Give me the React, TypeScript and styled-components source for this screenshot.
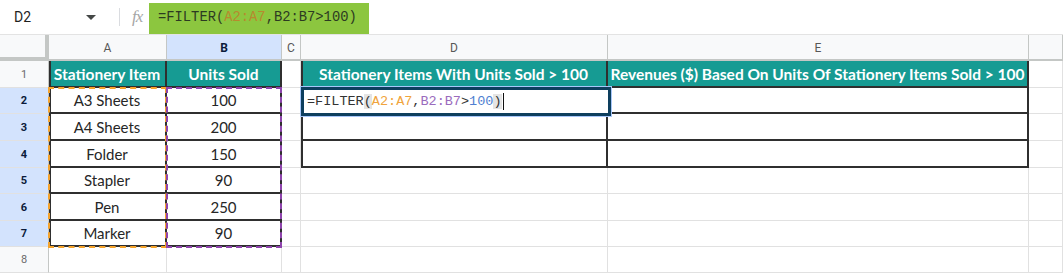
import React from 'react';
import styled, { createGlobalStyle } from 'styled-components';

const GlobalStyle = createGlobalStyle`
  html, body {
    margin: 0;
    padding: 0;
    background: #ffffff;
    overflow: hidden;
  }
  body {
    font-family: Roboto, "Liberation Sans", Arial, sans-serif;
  }
`;

const COL_WIDTHS = [49, 118, 115, 19, 307, 421, 34];
const ROW_HEIGHTS = [26, 27, 26, 27, 27, 26, 27, 26, 26];

const Page = styled.div`
  width: 1063px;
  height: 275px;
  overflow: hidden;
`;

const FormulaBar = styled.div`
  display: flex;
  align-items: center;
  height: 34px;
  border-bottom: 1px solid #e3e3e3;
`;

const NameBox = styled.div`
  width: 106px;
  padding-left: 14px;
  box-sizing: border-box;
  display: flex;
  align-items: center;
  justify-content: space-between;
  padding-right: 10px;
  font-size: 14px;
  color: #1f1f1f;
`;

const Caret = styled.span`
  width: 0;
  height: 0;
  border-left: 5px solid transparent;
  border-right: 5px solid transparent;
  border-top: 5px solid #444746;
`;

const Divider = styled.div`
  width: 1px;
  height: 18px;
  background: #dadce0;
  margin: 0 12px 0 13px;
`;

const Fx = styled.span`
  font-family: "Liberation Serif", "DejaVu Serif", serif;
  font-style: italic;
  font-size: 17px;
  color: #a6a6a6;
  width: 15px;
  letter-spacing: -1px;
`;

const FormulaHighlight = styled.div`
  align-self: flex-end;
  height: 31px;
  margin-left: 2px;
  width: 220px;
  box-sizing: border-box;
  padding: 0 0 2px 9px;
  background: #8cc63f;
  display: flex;
  align-items: center;
  font-family: "Liberation Mono", "DejaVu Sans Mono", monospace;
  font-size: 13.8px;
  color: #2c3a22;
`;

const Token = styled.span<{ $color?: string; $paren?: boolean }>`
  color: ${p => p.$color || 'inherit'};
  background: ${p => (p.$paren ? '#e4e4e4' : 'transparent')};
`;

const Sheet = styled.div`
  display: grid;
  grid-template-columns: ${COL_WIDTHS.map(w => `${w}px`).join(' ')};
  grid-template-rows: ${ROW_HEIGHTS.map(h => `${h}px`).join(' ')};
`;

type CellKind = 'corner' | 'colHead' | 'rowHead' | 'plain' | 'teal' | 'data';

const Cell = styled.div<{
  $row: number;
  $col: number;
  $kind: CellKind;
  $active?: boolean;
  $edge?: boolean;
}>`
  grid-row: ${p => p.$row};
  grid-column: ${p => p.$col};
  box-sizing: border-box;
  display: flex;
  align-items: center;
  justify-content: center;
  overflow: hidden;
  white-space: nowrap;
  ${p => {
    switch (p.$kind) {
      case 'corner':
        return `
          background: #f8f9fa;
          border-right: 4px solid #c4c7c5;
          border-bottom: 4px solid #c4c7c5;
        `;
      case 'colHead':
        return `
          background: ${p.$active ? '#d3e3fd' : '#f8f9fa'};
          border-right: 1px solid #c4c7c5;
          border-bottom: 2px solid #c4c7c5;
          font-family: Roboto, "Liberation Sans", Arial, sans-serif;
          font-size: 12px;
          font-weight: ${p.$active ? 700 : 400};
          color: ${p.$active ? '#0b1b3a' : '#575757'};
          padding-top: 2px;
        `;
      case 'rowHead':
        return `
          background: ${p.$active ? '#d3e3fd' : '#f8f9fa'};
          border-right: 1px solid #c4c7c5;
          border-bottom: 1px solid #e1e1e1;
          font-family: Roboto, "Liberation Sans", Arial, sans-serif;
          font-size: 11px;
          font-weight: ${p.$active ? 700 : 400};
          color: ${p.$active ? '#0b1b3a' : '#6b6b6b'};
        `;
      case 'teal':
        return `
          background: #169b93;
          border-right: 2px solid #2f2f2f;
          border-bottom: 2px solid #2f2f2f;
          font-family: Lato, "Open Sans", sans-serif;
          font-weight: 700;
          font-size: 15.5px;
          color: #ffffff;
          ${p.$edge ? 'box-shadow: inset 2px 0 0 #2f2f2f;' : ''}
        `;
      case 'data':
        return `
          background: #ffffff;
          border-right: 2px solid #2f2f2f;
          border-bottom: 2px solid #2f2f2f;
          font-family: Lato, "Open Sans", sans-serif;
          font-size: 15px;
          color: #262626;
          ${p.$edge ? 'box-shadow: inset 2px 0 0 #2f2f2f;' : ''}
        `;
      default:
        return `
          background: #ffffff;
          border-right: 1px solid #e1e1e1;
          border-bottom: 1px solid #e1e1e1;
        `;
    }
  }}
`;

const RangeOutline = styled.div<{ $col: number; $color: string }>`
  grid-row: 3 / 9;
  grid-column: ${p => p.$col};
  margin: -1px 0 -1px -1px;
  border: 2px dashed ${p => p.$color};
  pointer-events: none;
  z-index: 2;
`;

const Editor = styled.div`
  grid-row: 3;
  grid-column: 5;
  margin: -1px -3px -2px 0;
  border: 3px solid #0e3f5e;
  box-shadow: 0 0 0 1px #a8c7fa;
  background: #ffffff;
  z-index: 3;
  display: flex;
  align-items: center;
  padding-left: 3px;
  font-family: "Liberation Mono", "DejaVu Sans Mono", monospace;
  font-size: 13.5px;
  color: #333333;
`;

const TextCursor = styled.span`
  display: inline-block;
  width: 1px;
  height: 17px;
  background: #111;
  margin-left: 1px;
`;

const ITEMS = ['A3 Sheets', 'A4 Sheets', 'Folder', 'Stapler', 'Pen', 'Marker'];
const UNITS = [100, 200, 150, 90, 250, 90];
const COLS = ['A', 'B', 'C', 'D', 'E', ''];

function cellFor(row: number, col: number) {
  // row: sheet row number (1..8), col: 2..7 grid column
  const key = `${row}-${col}`;
  if (row === 1) {
    if (col === 2) return <Cell key={key} $row={2} $col={col} $kind="teal" $edge>Stationery Item</Cell>;
    if (col === 3) return <Cell key={key} $row={2} $col={col} $kind="teal">Units Sold</Cell>;
    if (col === 5) return <Cell key={key} $row={2} $col={col} $kind="teal" $edge>Stationery Items With Units Sold &gt; 100</Cell>;
    if (col === 6) return <Cell key={key} $row={2} $col={col} $kind="teal">Revenues ($) Based On Units Of Stationery Items Sold &gt; 100</Cell>;
  }
  if (row >= 2 && row <= 7) {
    if (col === 2) return <Cell key={key} $row={row + 1} $col={col} $kind="data" $edge>{ITEMS[row - 2]}</Cell>;
    if (col === 3) return <Cell key={key} $row={row + 1} $col={col} $kind="data">{UNITS[row - 2]}</Cell>;
  }
  if (row >= 2 && row <= 4) {
    if (col === 5) return <Cell key={key} $row={row + 1} $col={col} $kind="data" $edge />;
    if (col === 6) return <Cell key={key} $row={row + 1} $col={col} $kind="data" />;
  }
  return <Cell key={key} $row={row + 1} $col={col} $kind="plain" />;
}

export default function App() {
  const rows = [1, 2, 3, 4, 5, 6, 7, 8];
  return (
    <Page>
      <GlobalStyle />
      <FormulaBar>
        <NameBox>
          <span>D2</span>
          <Caret />
        </NameBox>
        <Divider />
        <Fx>fx</Fx>
        <FormulaHighlight>
          <Token>=FILTER(</Token>
          <Token $color="#b8892e">A2:A7</Token>
          <Token>,B2:B7&gt;100)</Token>
        </FormulaHighlight>
      </FormulaBar>
      <Sheet>
        <Cell $row={1} $col={1} $kind="corner" />
        {COLS.map((c, i) => (
          <Cell key={`h${i}`} $row={1} $col={i + 2} $kind="colHead" $active={c === 'B'}>
            {c}
          </Cell>
        ))}
        {rows.map(r => (
          <React.Fragment key={`r${r}`}>
            <Cell $row={r + 1} $col={1} $kind="rowHead" $active={r >= 2 && r <= 7}>
              {r}
            </Cell>
            {[2, 3, 4, 5, 6, 7].map(c => cellFor(r, c))}
          </React.Fragment>
        ))}
        <RangeOutline $col={2} $color="#f5a32b" />
        <RangeOutline $col={3} $color="#8e44ad" />
        <Editor>
          <Token>=FILTER</Token>
          <Token $paren>(</Token>
          <Token $color="#f0a43c">A2:A7</Token>
          <Token>,</Token>
          <Token $color="#9a6bbd">B2:B7</Token>
          <Token>&gt;</Token>
          <Token $color="#4f7fd1">100</Token>
          <Token $paren>)</Token>
          <TextCursor />
        </Editor>
      </Sheet>
    </Page>
  );
}
